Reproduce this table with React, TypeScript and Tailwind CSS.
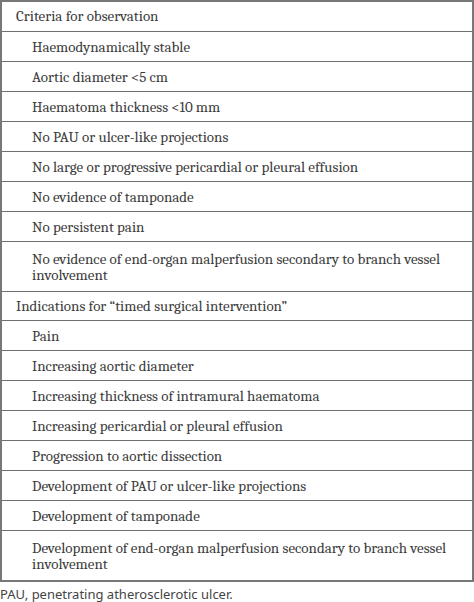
import React from 'react'

const observation = [
  'Haemodynamically stable',
  'Aortic diameter <5\u2009cm',
  'Haematoma thickness <10\u2009mm',
  'No PAU or ulcer-like projections',
  'No large or progressive pericardial or pleural effusion',
  'No evidence of tamponade',
  'No persistent pain',
  'No evidence of end-organ malperfusion secondary to branch vessel involvement',
]

const indications = [
  'Pain',
  'Increasing aortic diameter',
  'Increasing thickness of intramural haematoma',
  'Increasing pericardial or pleural effusion',
  'Progression to aortic dissection',
  'Development of PAU or ulcer-like projections',
  'Development of tamponade',
  'Development of end-organ malperfusion secondary to branch vessel involvement',
]

const Head = ({ text, first }: { text: string; first?: boolean }) => (
  <div className={`h-[29px] pl-[14px] flex items-center ${first ? '' : 'border-t border-[#707070]'}`}>
    {text}
  </div>
)

const Item = ({ text }: { text: string }) => {
  const tall = text.length > 60
  return (
    <div className={`border-t border-[#707070] pl-[30px] pr-3 flex items-center leading-[16px] ${tall ? 'h-[50px]' : 'h-[30px]'}`}>
      <span>{text}</span>
    </div>
  )
}

const App = () => {
  return (
    <div className="w-[474px] h-[602px] bg-white">
      <div className="border-2 border-[#777] text-[15px] text-[#3c3c3c] font-serif">
        <Head text="Criteria for observation" first />
        {observation.map((t) => (
          <Item key={t} text={t} />
        ))}
        <Head text={'Indications for \u201ctimed surgical intervention\u201d'} />
        {indications.map((t) => (
          <Item key={t} text={t} />
        ))}
      </div>
      <div className="pt-[3px] text-[13px] leading-[18px] text-[#444] font-sans">
        PAU, penetrating atherosclerotic ulcer.
      </div>
    </div>
  )
}

export default App
